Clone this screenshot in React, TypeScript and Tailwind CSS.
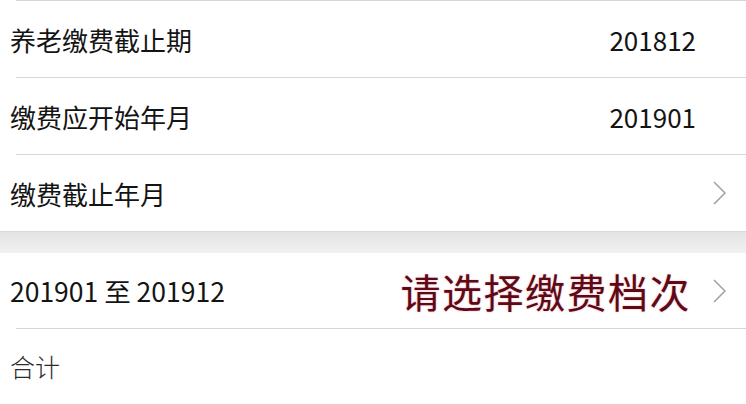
const font = "font-['Noto_Sans_CJK_SC','Noto_Sans',sans-serif]";

function Chevron() {
  return (
    <svg width="15" height="26" viewBox="0 0 15 26" className="shrink-0">
      <polyline points="2,2 13,13 2,24" fill="none" stroke="#a3a3a3" strokeWidth="1.6" strokeLinejoin="round" />
    </svg>
  );
}

function Divider() {
  return <div className="ml-4 h-px bg-[#d6d6d6]" />;
}

function InfoRow({ label, value }: { label: string; value: string }) {
  return (
    <div className="flex h-[76px] items-center justify-between pl-[10px] pr-[50px]">
      <span className="text-[26px] text-[#141414]">{label}</span>
      <span className="text-[26px] text-[#141414]">{value}</span>
    </div>
  );
}

export default function App() {
  return (
    <div className={`h-[404px] w-[746px] overflow-hidden bg-white ${font}`}>
      <Divider />
      <InfoRow label="养老缴费截止期" value="201812" />
      <Divider />
      <InfoRow label="缴费应开始年月" value="201901" />
      <Divider />
      <div className="flex h-[76px] items-center justify-between pl-[10px] pr-[19px]">
        <span className="text-[26px] text-[#141414]">缴费截止年月</span>
        <Chevron />
      </div>

      {/* section gap */}
      <div className="h-[22px] border-t border-[#d9d9d9] bg-gradient-to-b from-[#e4e4e4] to-[#f1f1f1]" />

      <div className="flex h-[75px] items-center justify-between pl-[10px] pr-[19px]">
        <span className="text-[26.5px] text-[#141414]">201901 至 201912</span>
        <div className="flex items-center gap-[21px]">
          <span className="text-[40px] font-normal leading-none tracking-[1.5px] text-[#5e0a16] [text-shadow:0_0_2px_rgba(225,80,105,0.5)]">
            请选择缴费档次
          </span>
          <Chevron />
        </div>
      </div>
      <Divider />
      <div className="flex h-[75px] items-center pl-[10px]">
        <span className="text-[25px] font-light text-[#2a2a2a]">合计</span>
      </div>
    </div>
  );
}
